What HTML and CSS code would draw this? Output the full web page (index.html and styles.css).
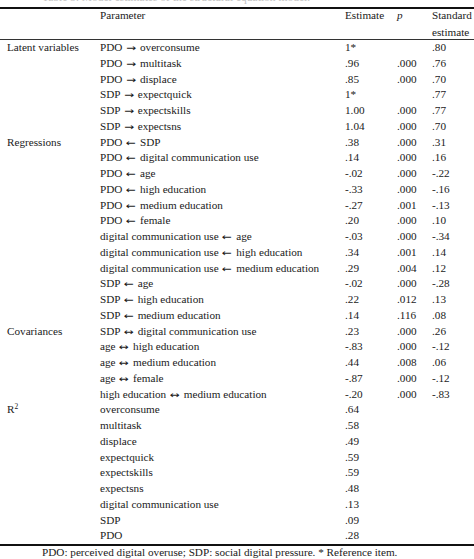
FILE: index.html
```html
<!DOCTYPE html>
<html>
<head>
<meta charset="utf-8">
<link rel="stylesheet" href="styles.css">
</head>
<body>
<div class="caption"><span>Table 3. Model estimates of the structural equation model.</span></div>
<div class="table">
  <div class="head">
    <div class="c0"></div>
    <div class="c1">Parameter</div>
    <div class="c2">Estimate</div>
    <div class="c3"><i>p</i></div>
    <div class="c4">Standard<br>estimate</div>
  </div>
  <div class="body">
    <div class="row"><div class="c0">Latent variables</div><div class="c1">PDO <span class="ar">→</span> overconsume</div><div class="c2">1*</div><div class="c3"></div><div class="c4">.80</div></div>
    <div class="row"><div class="c0"></div><div class="c1">PDO <span class="ar">→</span> multitask</div><div class="c2">.96</div><div class="c3">.000</div><div class="c4">.76</div></div>
    <div class="row"><div class="c0"></div><div class="c1">PDO <span class="ar">→</span> displace</div><div class="c2">.85</div><div class="c3">.000</div><div class="c4">.70</div></div>
    <div class="row"><div class="c0"></div><div class="c1">SDP <span class="ar">→</span> expectquick</div><div class="c2">1*</div><div class="c3"></div><div class="c4">.77</div></div>
    <div class="row"><div class="c0"></div><div class="c1">SDP <span class="ar">→</span> expectskills</div><div class="c2">1.00</div><div class="c3">.000</div><div class="c4">.77</div></div>
    <div class="row"><div class="c0"></div><div class="c1">SDP <span class="ar">→</span> expectsns</div><div class="c2">1.04</div><div class="c3">.000</div><div class="c4">.70</div></div>
    <div class="row"><div class="c0">Regressions</div><div class="c1">PDO <span class="ar">←</span> SDP</div><div class="c2">.38</div><div class="c3">.000</div><div class="c4">.31</div></div>
    <div class="row"><div class="c0"></div><div class="c1">PDO <span class="ar">←</span> digital communication use</div><div class="c2">.14</div><div class="c3">.000</div><div class="c4">.16</div></div>
    <div class="row"><div class="c0"></div><div class="c1">PDO <span class="ar">←</span> age</div><div class="c2">-.02</div><div class="c3">.000</div><div class="c4">-.22</div></div>
    <div class="row"><div class="c0"></div><div class="c1">PDO <span class="ar">←</span> high education</div><div class="c2">-.33</div><div class="c3">.000</div><div class="c4">-.16</div></div>
    <div class="row"><div class="c0"></div><div class="c1">PDO <span class="ar">←</span> medium education</div><div class="c2">-.27</div><div class="c3">.001</div><div class="c4">-.13</div></div>
    <div class="row"><div class="c0"></div><div class="c1">PDO <span class="ar">←</span> female</div><div class="c2">.20</div><div class="c3">.000</div><div class="c4">.10</div></div>
    <div class="row"><div class="c0"></div><div class="c1">digital communication use <span class="ar">←</span> age</div><div class="c2">-.03</div><div class="c3">.000</div><div class="c4">-.34</div></div>
    <div class="row"><div class="c0"></div><div class="c1">digital communication use <span class="ar">←</span> high education</div><div class="c2">.34</div><div class="c3">.001</div><div class="c4">.14</div></div>
    <div class="row"><div class="c0"></div><div class="c1">digital communication use <span class="ar">←</span> medium education</div><div class="c2">.29</div><div class="c3">.004</div><div class="c4">.12</div></div>
    <div class="row"><div class="c0"></div><div class="c1">SDP <span class="ar">←</span> age</div><div class="c2">-.02</div><div class="c3">.000</div><div class="c4">-.28</div></div>
    <div class="row"><div class="c0"></div><div class="c1">SDP <span class="ar">←</span> high education</div><div class="c2">.22</div><div class="c3">.012</div><div class="c4">.13</div></div>
    <div class="row"><div class="c0"></div><div class="c1">SDP <span class="ar">←</span> medium education</div><div class="c2">.14</div><div class="c3">.116</div><div class="c4">.08</div></div>
    <div class="row"><div class="c0">Covariances</div><div class="c1">SDP <span class="ar">↔</span> digital communication use</div><div class="c2">.23</div><div class="c3">.000</div><div class="c4">.26</div></div>
    <div class="row"><div class="c0"></div><div class="c1">age <span class="ar">↔</span> high education</div><div class="c2">-.83</div><div class="c3">.000</div><div class="c4">-.12</div></div>
    <div class="row"><div class="c0"></div><div class="c1">age <span class="ar">↔</span> medium education</div><div class="c2">.44</div><div class="c3">.008</div><div class="c4">.06</div></div>
    <div class="row"><div class="c0"></div><div class="c1">age <span class="ar">↔</span> female</div><div class="c2">-.87</div><div class="c3">.000</div><div class="c4">-.12</div></div>
    <div class="row"><div class="c0"></div><div class="c1">high education <span class="ar">↔</span> medium education</div><div class="c2">-.20</div><div class="c3">.000</div><div class="c4">-.83</div></div>
    <div class="row"><div class="c0">R<sup>2</sup></div><div class="c1">overconsume</div><div class="c2">.64</div><div class="c3"></div><div class="c4"></div></div>
    <div class="row"><div class="c0"></div><div class="c1">multitask</div><div class="c2">.58</div><div class="c3"></div><div class="c4"></div></div>
    <div class="row"><div class="c0"></div><div class="c1">displace</div><div class="c2">.49</div><div class="c3"></div><div class="c4"></div></div>
    <div class="row"><div class="c0"></div><div class="c1">expectquick</div><div class="c2">.59</div><div class="c3"></div><div class="c4"></div></div>
    <div class="row"><div class="c0"></div><div class="c1">expectskills</div><div class="c2">.59</div><div class="c3"></div><div class="c4"></div></div>
    <div class="row"><div class="c0"></div><div class="c1">expectsns</div><div class="c2">.48</div><div class="c3"></div><div class="c4"></div></div>
    <div class="row"><div class="c0"></div><div class="c1">digital communication use</div><div class="c2">.13</div><div class="c3"></div><div class="c4"></div></div>
    <div class="row"><div class="c0"></div><div class="c1">SDP</div><div class="c2">.09</div><div class="c3"></div><div class="c4"></div></div>
    <div class="row"><div class="c0"></div><div class="c1">PDO</div><div class="c2">.28</div><div class="c3"></div><div class="c4"></div></div>
  </div>
</div>
<div class="note">PDO: perceived digital overuse; SDP: social digital pressure. * Reference item.</div>
</body>
</html>
```
FILE: styles.css
```css
html, body {
  margin: 0;
  padding: 0;
  background: #fff;
}
body {
  width: 474px;
  height: 559px;
  overflow: hidden;
  font-family: "Liberation Serif", "DejaVu Serif", serif;
  font-size: 11.2px;
  color: #1a1a1a;
}
.caption {
  height: 7px;
  overflow: hidden;
  padding-left: 42px;
}
.caption span {
  display: block;
  margin-top: -10px;
  line-height: 14px;
  font-size: 11.5px;
  color: #c4c4c4;
  white-space: nowrap;
}
.table {
  border-top: 2px solid #111;
  border-bottom: 2px solid #111;
  white-space: nowrap;
}
.head, .row {
  display: grid;
  grid-template-columns: 100px 245px 52px 35px 42px;
}
.head {
  height: 31px;
  line-height: 17px;
  border-bottom: 1px solid #333;
  margin-top: -2px;
  padding-bottom: 1px;
}
.row {
  height: 15.75px;
  line-height: 15.75px;
}
.c0 {
  padding-left: 7px;
}
.ar {
  font-family: "DejaVu Sans", sans-serif;
  font-size: 9.5px;
  display: inline-block;
  transform: scaleX(1.25);
  margin: 0 2px;
}
sup {
  font-size: 7.5px;
  line-height: 0;
  vertical-align: 4px;
}
.note {
  padding-left: 42px;
  line-height: 13px;
}
```
